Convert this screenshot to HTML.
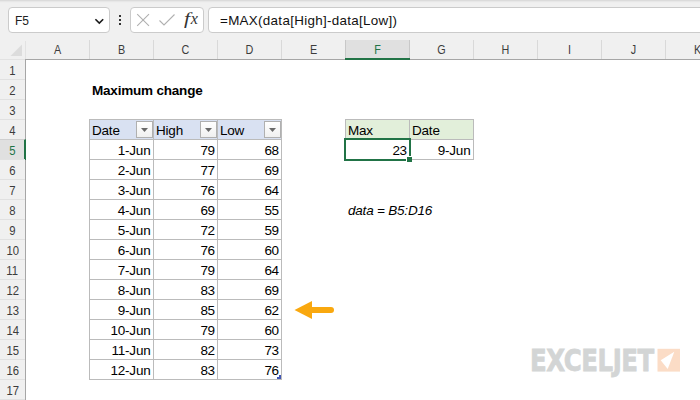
<!DOCTYPE html>
<html><head><meta charset="utf-8"><title>Maximum change</title>
<style>
html,body{margin:0;padding:0;}
body{width:700px;height:400px;overflow:hidden;background:#fff;position:relative;font-family:"Liberation Sans",sans-serif;color:#000;}
div,span{position:absolute;box-sizing:border-box;white-space:nowrap;}
.top{left:0;top:0;width:700px;height:40px;background:#f0f0f0;}
.topshade{left:0;top:0;width:700px;height:3px;background:linear-gradient(#dcdcdc,#f0f0f0);}
.box{background:#fff;border:1px solid #cbcbcb;border-radius:4px;top:7px;height:26px;}
.ui{font-size:12px;color:#3c3c3c;line-height:20px;text-align:center;}
.colh{top:40px;height:19px;transform:scaleX(0.9);}
.rowh{left:0;width:25px;height:20px;margin-top:1px;}
.c{font-size:13.5px;line-height:20px;height:20px;margin-top:1px;letter-spacing:-0.2px;}
.r{text-align:right;}
.hl{background:#bfbfbf;}
</style></head><body>

<div class="top"></div><div style="left:0;top:0;width:700px;height:1px;background:#dbdbdb;"></div><div style="left:0;top:1px;width:700px;height:1px;background:#e7e7e7;"></div><div style="left:0;top:2px;width:700px;height:1px;background:#eeeeee;"></div>
<div class="box" style="left:8px;width:102px;"></div>
<div class="ui" style="left:15px;top:11px;font-size:12px;color:#222;text-align:left;">F5</div>
<svg style="position:absolute;left:94px;top:17.5px" width="10" height="8" viewBox="0 0 10 8"><path d="M1.4 1.2 L5.3 5.1 L9.2 1.2" fill="none" stroke="#1a1a1a" stroke-width="1.6"/></svg>
<svg style="position:absolute;left:118px;top:14px" width="4" height="12" viewBox="0 0 4 12"><rect x="1" y="1" width="2" height="2" fill="#333"/><rect x="1" y="5" width="2" height="2" fill="#333"/><rect x="1" y="9" width="2" height="2" fill="#333"/></svg>
<div class="box" style="left:130px;width:74px;"></div>
<svg style="position:absolute;left:136px;top:13px" width="42" height="14" viewBox="-2 0 42 14"><path d="M-0.8 1.2 L11 12.8 M11 1.2 L-0.8 12.8" fill="none" stroke="#b0b0b0" stroke-width="1.1"/><path d="M21.5 7.5 L26 12 L36.5 1.5" fill="none" stroke="#b0b0b0" stroke-width="1.1"/></svg>
<div style="left:184px;top:9px;width:16px;height:20px;font-family:'Liberation Serif',serif;font-style:italic;font-size:16px;line-height:20px;color:#333;"><span style="left:0;top:0;transform-origin:0 50%;transform:scaleX(1.35);">f</span><span style="left:6.8px;top:0;">x</span></div>
<div class="box" style="left:208px;width:500px;"></div>
<div style="left:220px;top:10.6px;font-size:13.4px;letter-spacing:0.31px;line-height:20px;color:#111;">=MAX(data[High]-data[Low])</div>
<div style="left:0;top:40px;width:700px;height:20px;background:#f0f0f0;"></div>
<div style="left:26px;top:59px;width:674px;height:1px;background:#a6a6a6;"></div>
<div style="left:0;top:59px;width:25px;height:1px;background:#e2e2e2;"></div>
<div style="left:0;top:60px;width:25px;height:340px;background:#f0f0f0;"></div>
<div style="left:25px;top:42px;width:1px;height:358px;background:#a6a6a6;"></div>
<div style="left:25px;top:41px;width:1px;height:18px;background:#e2e2e2;"></div>
<svg style="position:absolute;left:10px;top:44px" width="13" height="13" viewBox="0 0 13 13"><path d="M12 0.5 L12 12 L0.5 12 Z" fill="#dcdcdc"/></svg>
<div class="ui colh" style="left:26px;width:63px;">A</div>
<div style="left:89px;top:40px;width:1px;height:19px;background:#d9d9d9;"></div>
<div class="ui colh" style="left:90px;width:63px;">B</div>
<div style="left:153px;top:40px;width:1px;height:19px;background:#d9d9d9;"></div>
<div class="ui colh" style="left:154px;width:63px;">C</div>
<div style="left:217px;top:40px;width:1px;height:19px;background:#d9d9d9;"></div>
<div class="ui colh" style="left:218px;width:63px;">D</div>
<div style="left:281px;top:40px;width:1px;height:19px;background:#d9d9d9;"></div>
<div class="ui colh" style="left:282px;width:63px;">E</div>
<div style="left:345px;top:40px;width:1px;height:19px;background:#d9d9d9;"></div>
<div style="left:346px;top:40px;width:63px;height:18px;background:#e0e0e0;"></div><div style="left:345px;top:58px;width:65px;height:2px;background:#217346;"></div><div style="left:345px;top:40px;width:1px;height:18px;background:#c8c8c8;"></div>
<div class="ui colh" style="left:346px;width:63px;color:#217346;">F</div>
<div style="left:409px;top:40px;width:1px;height:18px;background:#c8c8c8;"></div>
<div class="ui colh" style="left:410px;width:63px;">G</div>
<div style="left:473px;top:40px;width:1px;height:19px;background:#d9d9d9;"></div>
<div class="ui colh" style="left:474px;width:63px;">H</div>
<div style="left:537px;top:40px;width:1px;height:19px;background:#d9d9d9;"></div>
<div class="ui colh" style="left:538px;width:63px;">I</div>
<div style="left:601px;top:40px;width:1px;height:19px;background:#d9d9d9;"></div>
<div class="ui colh" style="left:602px;width:63px;">J</div>
<div style="left:665px;top:40px;width:1px;height:19px;background:#d9d9d9;"></div>
<div class="ui colh" style="left:666px;width:63px;">K</div>
<div style="left:0;top:79px;width:25px;height:1px;background:#e1e1e1;"></div>
<div class="ui rowh" style="top:60px;"><span style="position:static;display:inline-block;transform:scaleX(0.94);">1</span></div>
<div style="left:0;top:99px;width:25px;height:1px;background:#e1e1e1;"></div>
<div class="ui rowh" style="top:80px;"><span style="position:static;display:inline-block;transform:scaleX(0.94);">2</span></div>
<div style="left:0;top:119px;width:25px;height:1px;background:#e1e1e1;"></div>
<div class="ui rowh" style="top:100px;"><span style="position:static;display:inline-block;transform:scaleX(0.94);">3</span></div>
<div style="left:0;top:139px;width:25px;height:1px;background:#e1e1e1;"></div>
<div class="ui rowh" style="top:120px;"><span style="position:static;display:inline-block;transform:scaleX(0.94);">4</span></div>
<div style="left:0;top:139px;width:26px;height:21px;background:#e0e0e0;border-right:2px solid #217346;border-top:1px solid #cfcfcf;"></div>
<div style="left:0;top:159px;width:25px;height:1px;background:#e1e1e1;"></div>
<div class="ui rowh" style="top:140px;color:#217346;"><span style="position:static;display:inline-block;transform:scaleX(0.94);">5</span></div>
<div style="left:0;top:179px;width:25px;height:1px;background:#e1e1e1;"></div>
<div class="ui rowh" style="top:160px;"><span style="position:static;display:inline-block;transform:scaleX(0.94);">6</span></div>
<div style="left:0;top:199px;width:25px;height:1px;background:#e1e1e1;"></div>
<div class="ui rowh" style="top:180px;"><span style="position:static;display:inline-block;transform:scaleX(0.94);">7</span></div>
<div style="left:0;top:219px;width:25px;height:1px;background:#e1e1e1;"></div>
<div class="ui rowh" style="top:200px;"><span style="position:static;display:inline-block;transform:scaleX(0.94);">8</span></div>
<div style="left:0;top:239px;width:25px;height:1px;background:#e1e1e1;"></div>
<div class="ui rowh" style="top:220px;"><span style="position:static;display:inline-block;transform:scaleX(0.94);">9</span></div>
<div style="left:0;top:259px;width:25px;height:1px;background:#e1e1e1;"></div>
<div class="ui rowh" style="top:240px;"><span style="position:static;display:inline-block;transform:scaleX(0.94);">10</span></div>
<div style="left:0;top:279px;width:25px;height:1px;background:#e1e1e1;"></div>
<div class="ui rowh" style="top:260px;"><span style="position:static;display:inline-block;transform:scaleX(0.94);">11</span></div>
<div style="left:0;top:299px;width:25px;height:1px;background:#e1e1e1;"></div>
<div class="ui rowh" style="top:280px;"><span style="position:static;display:inline-block;transform:scaleX(0.94);">12</span></div>
<div style="left:0;top:319px;width:25px;height:1px;background:#e1e1e1;"></div>
<div class="ui rowh" style="top:300px;"><span style="position:static;display:inline-block;transform:scaleX(0.94);">13</span></div>
<div style="left:0;top:339px;width:25px;height:1px;background:#e1e1e1;"></div>
<div class="ui rowh" style="top:320px;"><span style="position:static;display:inline-block;transform:scaleX(0.94);">14</span></div>
<div style="left:0;top:359px;width:25px;height:1px;background:#e1e1e1;"></div>
<div class="ui rowh" style="top:340px;"><span style="position:static;display:inline-block;transform:scaleX(0.94);">15</span></div>
<div style="left:0;top:379px;width:25px;height:1px;background:#e1e1e1;"></div>
<div class="ui rowh" style="top:360px;"><span style="position:static;display:inline-block;transform:scaleX(0.94);">16</span></div>
<div style="left:0;top:399px;width:25px;height:1px;background:#e1e1e1;"></div>
<div class="ui rowh" style="top:380px;"><span style="position:static;display:inline-block;transform:scaleX(0.94);">17</span></div>
<div class="c" style="left:92px;top:80px;font-weight:bold;letter-spacing:-0.2px;">Maximum change</div>
<div style="left:89px;top:119px;width:193px;height:261px;background:#bbbbbb;"></div>
<div style="left:90px;top:120px;width:63px;height:19px;background:#d9e1f2;"></div>
<div style="left:90px;top:140px;width:63px;height:19px;background:#fff;"></div>
<div style="left:90px;top:160px;width:63px;height:19px;background:#fff;"></div>
<div style="left:90px;top:180px;width:63px;height:19px;background:#fff;"></div>
<div style="left:90px;top:200px;width:63px;height:19px;background:#fff;"></div>
<div style="left:90px;top:220px;width:63px;height:19px;background:#fff;"></div>
<div style="left:90px;top:240px;width:63px;height:19px;background:#fff;"></div>
<div style="left:90px;top:260px;width:63px;height:19px;background:#fff;"></div>
<div style="left:90px;top:280px;width:63px;height:19px;background:#fff;"></div>
<div style="left:90px;top:300px;width:63px;height:19px;background:#fff;"></div>
<div style="left:90px;top:320px;width:63px;height:19px;background:#fff;"></div>
<div style="left:90px;top:340px;width:63px;height:19px;background:#fff;"></div>
<div style="left:90px;top:360px;width:63px;height:19px;background:#fff;"></div>
<div style="left:136px;top:121px;width:17px;height:17px;background:linear-gradient(#fff,#f0f0f0);border:1px solid #b0b0b0;"></div>
<svg style="position:absolute;left:141px;top:128px" width="7" height="4" viewBox="0 0 7 4"><path d="M0 0 L7 0 L3.5 4 Z" fill="#6a6a6a"/></svg>
<div style="left:154px;top:120px;width:63px;height:19px;background:#d9e1f2;"></div>
<div style="left:154px;top:140px;width:63px;height:19px;background:#fff;"></div>
<div style="left:154px;top:160px;width:63px;height:19px;background:#fff;"></div>
<div style="left:154px;top:180px;width:63px;height:19px;background:#fff;"></div>
<div style="left:154px;top:200px;width:63px;height:19px;background:#fff;"></div>
<div style="left:154px;top:220px;width:63px;height:19px;background:#fff;"></div>
<div style="left:154px;top:240px;width:63px;height:19px;background:#fff;"></div>
<div style="left:154px;top:260px;width:63px;height:19px;background:#fff;"></div>
<div style="left:154px;top:280px;width:63px;height:19px;background:#fff;"></div>
<div style="left:154px;top:300px;width:63px;height:19px;background:#fff;"></div>
<div style="left:154px;top:320px;width:63px;height:19px;background:#fff;"></div>
<div style="left:154px;top:340px;width:63px;height:19px;background:#fff;"></div>
<div style="left:154px;top:360px;width:63px;height:19px;background:#fff;"></div>
<div style="left:200px;top:121px;width:17px;height:17px;background:linear-gradient(#fff,#f0f0f0);border:1px solid #b0b0b0;"></div>
<svg style="position:absolute;left:205px;top:128px" width="7" height="4" viewBox="0 0 7 4"><path d="M0 0 L7 0 L3.5 4 Z" fill="#6a6a6a"/></svg>
<div style="left:218px;top:120px;width:63px;height:19px;background:#d9e1f2;"></div>
<div style="left:218px;top:140px;width:63px;height:19px;background:#fff;"></div>
<div style="left:218px;top:160px;width:63px;height:19px;background:#fff;"></div>
<div style="left:218px;top:180px;width:63px;height:19px;background:#fff;"></div>
<div style="left:218px;top:200px;width:63px;height:19px;background:#fff;"></div>
<div style="left:218px;top:220px;width:63px;height:19px;background:#fff;"></div>
<div style="left:218px;top:240px;width:63px;height:19px;background:#fff;"></div>
<div style="left:218px;top:260px;width:63px;height:19px;background:#fff;"></div>
<div style="left:218px;top:280px;width:63px;height:19px;background:#fff;"></div>
<div style="left:218px;top:300px;width:63px;height:19px;background:#fff;"></div>
<div style="left:218px;top:320px;width:63px;height:19px;background:#fff;"></div>
<div style="left:218px;top:340px;width:63px;height:19px;background:#fff;"></div>
<div style="left:218px;top:360px;width:63px;height:19px;background:#fff;"></div>
<div style="left:264px;top:121px;width:17px;height:17px;background:linear-gradient(#fff,#f0f0f0);border:1px solid #b0b0b0;"></div>
<svg style="position:absolute;left:269px;top:128px" width="7" height="4" viewBox="0 0 7 4"><path d="M0 0 L7 0 L3.5 4 Z" fill="#6a6a6a"/></svg>
<div class="c" style="left:92px;top:120px;">Date</div>
<div class="c" style="left:156px;top:120px;">High</div>
<div class="c" style="left:220px;top:120px;">Low</div>
<div class="c r" style="left:90px;top:140px;width:60.5px;">1-Jun</div>
<div class="c r" style="left:154px;top:140px;width:60.6px;letter-spacing:-0.5px;">79</div>
<div class="c r" style="left:218px;top:140px;width:60.6px;letter-spacing:-0.5px;">68</div>
<div class="c r" style="left:90px;top:160px;width:60.5px;">2-Jun</div>
<div class="c r" style="left:154px;top:160px;width:60.6px;letter-spacing:-0.5px;">77</div>
<div class="c r" style="left:218px;top:160px;width:60.6px;letter-spacing:-0.5px;">69</div>
<div class="c r" style="left:90px;top:180px;width:60.5px;">3-Jun</div>
<div class="c r" style="left:154px;top:180px;width:60.6px;letter-spacing:-0.5px;">76</div>
<div class="c r" style="left:218px;top:180px;width:60.6px;letter-spacing:-0.5px;">64</div>
<div class="c r" style="left:90px;top:200px;width:60.5px;">4-Jun</div>
<div class="c r" style="left:154px;top:200px;width:60.6px;letter-spacing:-0.5px;">69</div>
<div class="c r" style="left:218px;top:200px;width:60.6px;letter-spacing:-0.5px;">55</div>
<div class="c r" style="left:90px;top:220px;width:60.5px;">5-Jun</div>
<div class="c r" style="left:154px;top:220px;width:60.6px;letter-spacing:-0.5px;">72</div>
<div class="c r" style="left:218px;top:220px;width:60.6px;letter-spacing:-0.5px;">59</div>
<div class="c r" style="left:90px;top:240px;width:60.5px;">6-Jun</div>
<div class="c r" style="left:154px;top:240px;width:60.6px;letter-spacing:-0.5px;">76</div>
<div class="c r" style="left:218px;top:240px;width:60.6px;letter-spacing:-0.5px;">60</div>
<div class="c r" style="left:90px;top:260px;width:60.5px;">7-Jun</div>
<div class="c r" style="left:154px;top:260px;width:60.6px;letter-spacing:-0.5px;">79</div>
<div class="c r" style="left:218px;top:260px;width:60.6px;letter-spacing:-0.5px;">64</div>
<div class="c r" style="left:90px;top:280px;width:60.5px;">8-Jun</div>
<div class="c r" style="left:154px;top:280px;width:60.6px;letter-spacing:-0.5px;">83</div>
<div class="c r" style="left:218px;top:280px;width:60.6px;letter-spacing:-0.5px;">69</div>
<div class="c r" style="left:90px;top:300px;width:60.5px;">9-Jun</div>
<div class="c r" style="left:154px;top:300px;width:60.6px;letter-spacing:-0.5px;">85</div>
<div class="c r" style="left:218px;top:300px;width:60.6px;letter-spacing:-0.5px;">62</div>
<div class="c r" style="left:90px;top:320px;width:60.5px;">10-Jun</div>
<div class="c r" style="left:154px;top:320px;width:60.6px;letter-spacing:-0.5px;">79</div>
<div class="c r" style="left:218px;top:320px;width:60.6px;letter-spacing:-0.5px;">60</div>
<div class="c r" style="left:90px;top:340px;width:60.5px;">11-Jun</div>
<div class="c r" style="left:154px;top:340px;width:60.6px;letter-spacing:-0.5px;">82</div>
<div class="c r" style="left:218px;top:340px;width:60.6px;letter-spacing:-0.5px;">73</div>
<div class="c r" style="left:90px;top:360px;width:60.5px;">12-Jun</div>
<div class="c r" style="left:154px;top:360px;width:60.6px;letter-spacing:-0.5px;">83</div>
<div class="c r" style="left:218px;top:360px;width:60.6px;letter-spacing:-0.5px;">76</div>
<svg style="position:absolute;left:277px;top:375px" width="4" height="4" viewBox="0 0 4 4"><path d="M4 0 L4 4 L0 4 L0 2 L2 2 L2 0 Z" fill="#4256b4"/></svg>
<div style="left:345px;top:119px;width:129px;height:41px;background:#bbbbbb;"></div>
<div style="left:346px;top:120px;width:63px;height:19px;background:#e2efda;"></div>
<div style="left:346px;top:140px;width:63px;height:19px;background:#fff;"></div>
<div style="left:410px;top:120px;width:63px;height:19px;background:#e2efda;"></div>
<div style="left:410px;top:140px;width:63px;height:19px;background:#fff;"></div>
<div class="c" style="left:348px;top:120px;">Max</div>
<div class="c" style="left:412px;top:120px;">Date</div>
<div class="c r" style="left:346px;top:140px;width:60.6px;letter-spacing:-0.5px;">23</div>
<div class="c r" style="left:410px;top:140px;width:60.5px;">9-Jun</div>
<div style="left:344px;top:138px;width:67px;height:23px;border:2px solid #217346;"></div>
<div style="left:406px;top:156px;width:7px;height:7px;background:#fff;"></div>
<div style="left:407px;top:157px;width:5px;height:5px;background:#217346;"></div>
<div style="left:412px;top:159px;width:62px;height:1px;background:#bbbbbb;"></div>
<div class="c" style="left:348px;top:200px;font-style:italic;">data = B5:D16</div>
<svg style="position:absolute;left:290px;top:298px" width="50" height="24" viewBox="290 298 50 24"><path d="M294.5 310 L312 301 L312 319 Z" fill="#f9a80f"/><path d="M311 310 L331 310" stroke="#f9a80f" stroke-width="6" stroke-linecap="round" fill="none"/></svg>
<div style="left:530.2px;top:340.3px;font-family:'DejaVu Sans','Liberation Sans',sans-serif;font-size:31px;line-height:40px;font-weight:bold;color:#d3d5d5;-webkit-text-stroke:0.8px #d3d5d5;transform-origin:0 0;transform:scaleX(0.79);letter-spacing:-0.6px;">EXCELJET</div>
<svg style="position:absolute;left:657px;top:348px" width="24" height="24" viewBox="657 348 24 24"><rect x="657.5" y="348.8" width="22.5" height="22.8" fill="#fbdcc6"/><path d="M660.7 360.3 L674.3 351.7 L667.7 369 Z" fill="#fff"/></svg>
</body></html>
